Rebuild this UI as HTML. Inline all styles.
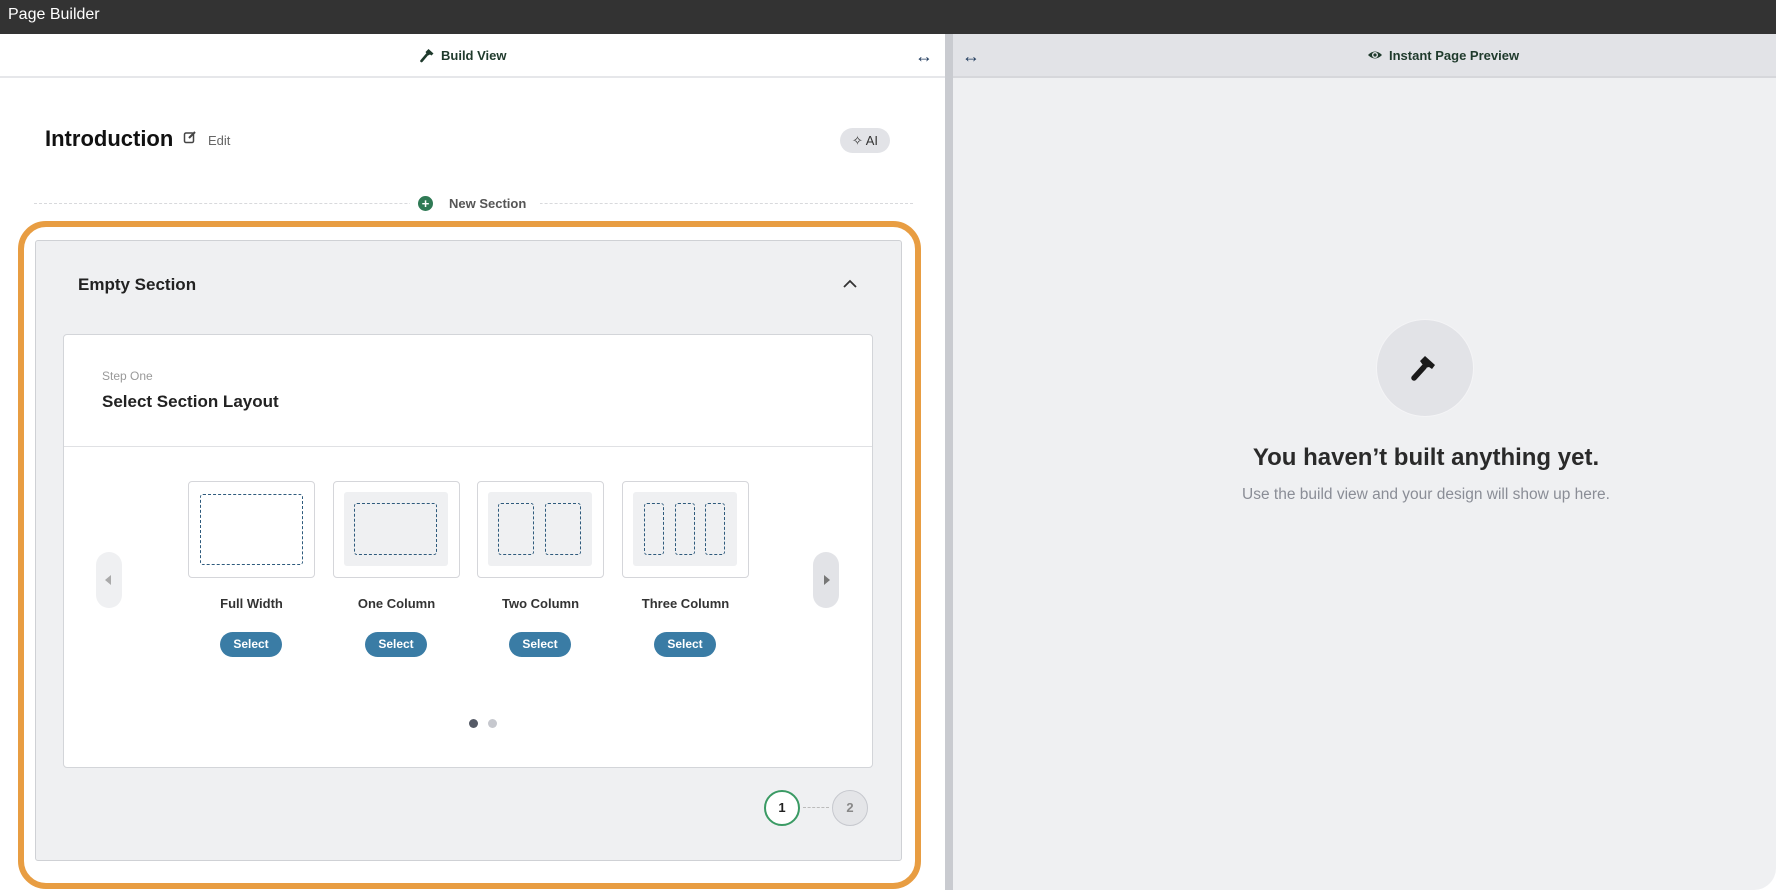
<!DOCTYPE html>
<html><head><meta charset="utf-8"><style>
*{box-sizing:border-box;margin:0;padding:0}
body{width:1776px;height:890px;overflow:hidden;background:#fff;font-family:"Liberation Sans",Arial,sans-serif;position:relative;color:#222}
.a{position:absolute}
.top{left:0;top:0;width:1776px;height:34px;background:#333}
.top span{position:absolute;left:8px;top:6px;color:#fff;font-size:16px}
.hdrL{left:0;top:34px;width:945px;height:44px;background:#fff;border-bottom:2px solid #e6e7ea}
.div{left:945px;top:34px;width:8px;height:856px;background:#c9cbd0}
.right{left:953px;top:34px;width:823px;height:856px;background:#eff0f2;border-bottom-right-radius:22px}
.hdrR{left:953px;top:34px;width:823px;height:44px;background:#e2e3e7;border-bottom:2px solid #d6d7db}
.ht{font-size:13px;font-weight:bold;color:#1f3a2c;display:flex;align-items:center;gap:6px}
.sel{width:62px;height:25px;border-radius:13px;background:#3a7ca5;color:#fff;font-size:12px;font-weight:bold;text-align:center;line-height:25px}
.lbl{font-size:13px;font-weight:bold;color:#333;text-align:center;width:127px}
.th{width:127px;height:97px;border:1.5px solid #d5d6da;border-radius:4px;background:#fff}
.in{position:absolute;left:10px;top:10px;width:104px;height:74px;background:#eff0f2;border-radius:3px}
.dash{position:absolute;border:1.3px dashed #2e5a7c;border-radius:3px}
.arr{font-size:18px;color:#1f3a5c;font-weight:bold;line-height:18px}
</style></head><body>
<div class="a top"><span>Page Builder</span></div>
<div class="a hdrL"></div>
<div class="a ht" style="left:419px;top:47px">
<svg width="16" height="16" viewBox="0 0 16 16"><path d="M2.5 14 L8 7.5" stroke="#1f3a2c" stroke-width="2.6" stroke-linecap="round"/><path d="M6.5 5 L9.5 2 L14.5 6.5 L12.5 8.5 L11 7.5 L9 8.5 Z" fill="#1f3a2c"/></svg>Build View</div>
<div class="a arr" style="left:915px;top:47px">↔</div>
<div class="a right"></div>
<div class="a hdrR"></div>
<div class="a div"></div>
<div class="a arr" style="left:962px;top:47px">↔</div>
<div class="a ht" style="left:1367px;top:47px">
<svg width="16" height="16" viewBox="0 0 16 16"><path d="M1 8 Q8 1 15 8 Q8 15 1 8Z" fill="#1f3a2c"/><circle cx="8" cy="8" r="3" fill="#e2e3e7"/><circle cx="8" cy="8" r="1.6" fill="#1f3a2c"/></svg>Instant Page Preview</div>

<div class="a" style="left:45px;top:126px;font-size:22px;font-weight:bold;color:#111">Introduction</div>
<svg class="a" style="left:183px;top:130px" width="14" height="14" viewBox="0 0 14 14"><rect x="1.5" y="3" width="9" height="9.5" rx="1.5" fill="none" stroke="#444" stroke-width="1.5"/><path d="M6 8 L12 2" stroke="#444" stroke-width="2"/></svg>
<div class="a" style="left:208px;top:133px;font-size:13px;color:#666">Edit</div>
<div class="a" style="left:840px;top:128px;width:50px;height:25px;border-radius:13px;background:#e2e3e7;font-size:13px;color:#333;text-align:center;line-height:25px">✧ AI</div>

<div class="a" style="left:34px;top:203px;width:879px;border-top:1px dashed #d8d9dc"></div>
<div class="a" style="left:410px;top:193px;width:130px;height:22px;background:#fff"></div>
<div class="a" style="left:418px;top:196px;width:15px;height:15px;border-radius:50%;background:#2f7a55;color:#fff;font-size:13px;line-height:15px;text-align:center;font-weight:bold">+</div>
<div class="a" style="left:449px;top:196px;font-size:13px;color:#555;font-weight:bold">New Section</div>

<div class="a" style="left:18px;top:221px;width:903px;height:668px;border:6px solid #e89d42;border-radius:28px"></div>
<div class="a" style="left:35px;top:240px;width:867px;height:621px;background:#eff0f2;border:1.5px solid #cfd1d5;border-radius:3px"></div>
<div class="a" style="left:78px;top:275px;font-size:17px;font-weight:bold;color:#222">Empty Section</div>
<svg class="a" style="left:842px;top:278px" width="16" height="12" viewBox="0 0 16 12"><path d="M2 9 L8 3 L14 9" fill="none" stroke="#333" stroke-width="1.8"/></svg>

<div class="a" style="left:63px;top:334px;width:810px;height:434px;background:#fff;border:1.5px solid #d3d5d9;border-radius:4px"></div>
<div class="a" style="left:64px;top:446px;width:808px;border-top:1.5px solid #e0e1e4"></div>
<div class="a" style="left:102px;top:369px;font-size:12px;color:#999">Step One</div>
<div class="a" style="left:102px;top:392px;font-size:17px;font-weight:bold;color:#222">Select Section Layout</div>

<div class="a" style="left:96px;top:552px;width:26px;height:56px;border-radius:13px;background:#eff0f2"><div style="position:absolute;left:9px;top:23px;width:0;height:0;border-top:5px solid transparent;border-bottom:5px solid transparent;border-right:6px solid #aaa"></div></div>
<div class="a" style="left:813px;top:552px;width:26px;height:56px;border-radius:13px;background:#e2e3e7"><div style="position:absolute;left:11px;top:23px;width:0;height:0;border-top:5px solid transparent;border-bottom:5px solid transparent;border-left:6px solid #777"></div></div>

<div class="a th" style="left:188px;top:481px"><div class="dash" style="left:11px;top:12px;width:103px;height:71px"></div></div>
<div class="a th" style="left:333px;top:481px"><div class="in"><div class="dash" style="left:10px;top:11px;width:83px;height:52px"></div></div></div>
<div class="a th" style="left:477px;top:481px"><div class="in"><div class="dash" style="left:10px;top:11px;width:36px;height:52px"></div><div class="dash" style="left:57px;top:11px;width:36px;height:52px"></div></div></div>
<div class="a th" style="left:622px;top:481px"><div class="in"><div class="dash" style="left:11px;top:11px;width:20px;height:52px"></div><div class="dash" style="left:42px;top:11px;width:20px;height:52px"></div><div class="dash" style="left:72px;top:11px;width:20px;height:52px"></div></div></div>

<div class="a lbl" style="left:188px;top:596px">Full Width</div>
<div class="a lbl" style="left:333px;top:596px">One Column</div>
<div class="a lbl" style="left:477px;top:596px">Two Column</div>
<div class="a lbl" style="left:622px;top:596px">Three Column</div>
<div class="a sel" style="left:220px;top:632px">Select</div>
<div class="a sel" style="left:365px;top:632px">Select</div>
<div class="a sel" style="left:509px;top:632px">Select</div>
<div class="a sel" style="left:654px;top:632px">Select</div>

<div class="a" style="left:469px;top:719px;width:9px;height:9px;border-radius:50%;background:#555a66"></div>
<div class="a" style="left:488px;top:719px;width:9px;height:9px;border-radius:50%;background:#c6c8ce"></div>

<div class="a" style="left:764px;top:790px;width:36px;height:36px;border-radius:50%;border:2.5px solid #3a9a64;background:#fff;text-align:center;line-height:31px;font-size:13px;font-weight:bold;color:#222">1</div>
<div class="a" style="left:803px;top:807px;width:26px;border-top:1.5px dashed #bbb"></div>
<div class="a" style="left:832px;top:790px;width:36px;height:36px;border-radius:50%;border:1.5px solid #c6c8ce;background:#e4e5e8;text-align:center;line-height:33px;font-size:13px;font-weight:bold;color:#888">2</div>

<div class="a" style="left:1376px;top:319px;width:98px;height:98px;border-radius:50%;background:#e2e3e7;border:1.5px solid #f4f4f6"></div>
<svg class="a" style="left:1403px;top:346px" width="44" height="44" viewBox="0 0 44 44"><path d="M11 32 L21 21" stroke="#1a1a1a" stroke-width="5.5" stroke-linecap="round"/><path d="M17 15 L22 10 L32 19 L29 23 L26 21 L22 22 Z" fill="#1a1a1a"/></svg>
<div class="a" style="left:1153px;top:444px;width:546px;text-align:center;font-size:24px;font-weight:bold;color:#2a2a2a">You haven’t built anything yet.</div>
<div class="a" style="left:1103px;top:486px;width:646px;text-align:center;font-size:15.5px;color:#8a8d96">Use the build view and your design will show up here.</div>
</body></html>
